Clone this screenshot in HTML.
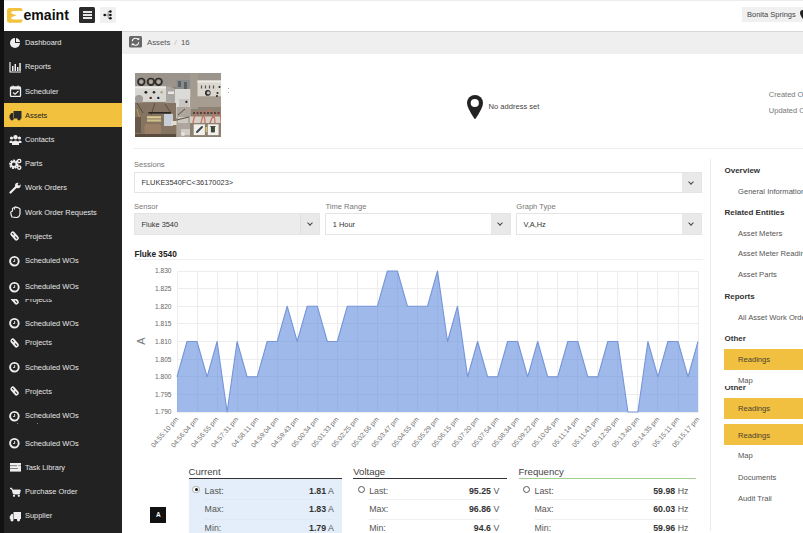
<!DOCTYPE html><html><head><meta charset="utf-8"><style>
*{margin:0;padding:0;box-sizing:border-box;white-space:nowrap}
html,body{width:803px;height:533px;overflow:hidden;background:#fff;font-family:"Liberation Sans",sans-serif;color:#333}
.a{position:absolute;white-space:nowrap}
.si{position:absolute;left:25px;font-size:7.45px;color:#e4e4e4;line-height:10px;height:10px}
.lbl{position:absolute;font-size:7.55px;color:#777;line-height:10px}
.inp{position:absolute;border:1px solid #e4e4e4;background:#fff;font-size:7.4px;color:#333;line-height:20px;padding-left:6.5px;padding-top:.6px}
.arr{position:absolute;top:0;right:0;bottom:0;width:19px;background:#e9e9e9}
.arr:after{content:"";position:absolute;left:7px;top:7px;width:3px;height:3px;border-right:1.1px solid #444;border-bottom:1.1px solid #444;transform:rotate(45deg)}
.nh{position:absolute;margin-top:.6px;left:724.5px;font-size:8px;font-weight:bold;color:#333;line-height:10px}
.ni{position:absolute;margin-top:.6px;left:738px;font-size:7.6px;color:#555;line-height:10px}
.band{position:absolute;left:724px;width:79px;height:21px;background:#f1c040}
.th{position:absolute;font-size:9.6px;color:#444;line-height:12px}
.rl{position:absolute;font-size:8.8px;color:#555;line-height:11px}
.rv{position:absolute;font-size:8.8px;color:#555;line-height:11px;text-align:right}
.rv b{color:#333}
</style></head><body>

<div class="a" style="left:0;top:0;width:3.5px;height:533px;background:#111"></div>
<div class="a" style="left:3.5px;top:30.5px;width:118px;height:503px;background:#222"></div>
<div class="a" style="left:3.5px;top:103.4px;width:118px;height:24px;background:#f2c23f"></div>
<svg style="position:absolute;left:9px;top:36.7px" width="13" height="12" viewBox="0 0 13 12"><circle cx="6" cy="6" r="5" fill="#eee"/><path d="M6 6 L11 6 A5 5 0 0 0 6 1 Z" fill="#222"/><path d="M7 5 L11 5 A5 5 0 0 0 7 1Z" fill="#eee"/></svg>
<div class="si" style="top:38.2px;color:#e4e4e4">Dashboard</div>
<svg style="position:absolute;left:9px;top:60.8px" width="13" height="12" viewBox="0 0 13 12"><path d="M1 1 V11 H12" stroke="#eee" stroke-width="1.2" fill="none"/><rect x="3" y="5" width="1.5" height="5" fill="#eee"/><rect x="5.5" y="3" width="1.5" height="7" fill="#eee"/><rect x="8" y="6" width="1.5" height="4" fill="#eee"/><rect x="10.3" y="2" width="1.5" height="8" fill="#eee"/></svg>
<div class="si" style="top:62.3px;color:#e4e4e4">Reports</div>
<svg style="position:absolute;left:9px;top:85.0px" width="13" height="12" viewBox="0 0 13 12"><rect x="1.5" y="2" width="10" height="9.5" rx="1" stroke="#eee" stroke-width="1.3" fill="none"/><rect x="1.5" y="2" width="10" height="2.5" fill="#eee"/><path d="M4 7.5 L6 9.3 L9.5 6" stroke="#eee" stroke-width="1.2" fill="none"/><rect x="3.5" y="0.5" width="1.2" height="2" fill="#eee"/><rect x="8.5" y="0.5" width="1.2" height="2" fill="#eee"/></svg>
<div class="si" style="top:86.5px;color:#e4e4e4">Scheduler</div>
<svg style="position:absolute;left:9px;top:109.3px" width="13" height="12" viewBox="0 0 13 12"><rect x="4.5" y="2" width="8" height="7.5" fill="#2a2a2a"/><path d="M4 4 H2.3 L0.5 6.5 V9.5 H4Z" fill="#2a2a2a"/><circle cx="3" cy="9.8" r="1.7" fill="#2a2a2a"/><circle cx="10" cy="9.8" r="1.7" fill="#2a2a2a"/></svg>
<div class="si" style="top:110.8px;color:#222">Assets</div>
<svg style="position:absolute;left:9px;top:133.7px" width="13" height="12" viewBox="0 0 13 12"><circle cx="6.5" cy="3.2" r="2.2" fill="#eee"/><circle cx="2.5" cy="4" r="1.6" fill="#eee"/><circle cx="10.5" cy="4" r="1.6" fill="#eee"/><path d="M3 11 V8 Q6.5 5 10 8 V11Z" fill="#eee"/><path d="M0.5 9 V7.5 Q2 6 3.5 7 V9Z" fill="#eee"/><path d="M12.5 9 V7.5 Q11 6 9.5 7 V9Z" fill="#eee"/></svg>
<div class="si" style="top:135.2px;color:#e4e4e4">Contacts</div>
<svg style="position:absolute;left:9px;top:157.7px" width="13" height="12" viewBox="0 0 13 12"><circle cx="4.8" cy="6.3" r="3.6" fill="none" stroke="#eee" stroke-width="2.2" stroke-dasharray="1.9 0.75"/><circle cx="4.8" cy="6.3" r="2.6" fill="none" stroke="#eee" stroke-width="1.6"/><circle cx="10.2" cy="3" r="1.6" fill="none" stroke="#eee" stroke-width="1.4"/><circle cx="10.2" cy="9.6" r="1.6" fill="none" stroke="#eee" stroke-width="1.4"/></svg>
<div class="si" style="top:159.2px;color:#e4e4e4">Parts</div>
<svg style="position:absolute;left:9px;top:181.8px" width="13" height="12" viewBox="0 0 13 12"><path d="M1.5 10.5 L7 5" stroke="#eee" stroke-width="2.2" stroke-linecap="round"/><circle cx="8.8" cy="3.5" r="2.8" fill="#eee"/><circle cx="10" cy="2.2" r="1.2" fill="#222"/></svg>
<div class="si" style="top:183.3px;color:#e4e4e4">Work Orders</div>
<svg style="position:absolute;left:9px;top:206.0px" width="13" height="12" viewBox="0 0 13 12"><path d="M3 11 Q1.5 8 1.8 6 L3.5 5 V2.5 Q4.5 1 5.5 2.5 V1.5 Q6.5 0.5 7.5 1.5 Q8.5 1 9.5 2 Q10.5 2 11 3 V8 Q10.5 11 8 11.5Z" fill="none" stroke="#eee" stroke-width="1.2"/></svg>
<div class="si" style="top:207.5px;color:#e4e4e4">Work Order Requests</div>
<svg style="position:absolute;left:9px;top:230.3px" width="13" height="12" viewBox="0 0 13 12"><g transform="rotate(-42 5.6 6)"><rect x="3.2" y="0.8" width="4.8" height="10.4" rx="2.4" fill="#eee"/><path d="M5.6 2.6 V4.2 M5.6 7.2 V9.2" stroke="#333" stroke-width="1.1" stroke-linecap="round"/></g></svg>
<div class="si" style="top:231.8px;color:#e4e4e4">Projects</div>
<svg style="position:absolute;left:9px;top:254.6px" width="13" height="12" viewBox="0 0 13 12"><circle cx="5.4" cy="6.2" r="4.3" fill="none" stroke="#eee" stroke-width="1.9"/><path d="M5.6 4 V6.5 H4" stroke="#eee" stroke-width="1.1" fill="none" opacity="0.8"/></svg>
<div class="si" style="top:256.1px;color:#e4e4e4">Scheduled WOs</div>
<div class="a" style="left:3.5px;top:294.8px;width:118px;height:12px;overflow:hidden"><div class="si" style="left:21.5px;top:0px;">Projects</div></div>
<svg style="position:absolute;left:9px;top:293.8px" width="13" height="12" viewBox="0 0 13 12"><g transform="rotate(-42 5.6 6)"><rect x="3.2" y="0.8" width="4.8" height="10.4" rx="2.4" fill="#eee"/><path d="M5.6 2.6 V4.2 M5.6 7.2 V9.2" stroke="#333" stroke-width="1.1" stroke-linecap="round"/></g></svg>
<div class="a" style="left:3.5px;top:277px;width:118px;height:21.6px;background:#222"></div>
<svg style="position:absolute;left:9px;top:280.9px" width="13" height="12" viewBox="0 0 13 12"><circle cx="5.4" cy="6.2" r="4.3" fill="none" stroke="#eee" stroke-width="1.9"/><path d="M5.6 4 V6.5 H4" stroke="#eee" stroke-width="1.1" fill="none" opacity="0.8"/></svg>
<div class="si" style="top:282.4px;color:#e4e4e4">Scheduled WOs</div>
<svg style="position:absolute;left:9px;top:317.4px" width="13" height="12" viewBox="0 0 13 12"><circle cx="5.4" cy="6.2" r="4.3" fill="none" stroke="#eee" stroke-width="1.9"/><path d="M5.6 4 V6.5 H4" stroke="#eee" stroke-width="1.1" fill="none" opacity="0.8"/></svg>
<div class="si" style="top:318.9px;color:#e4e4e4">Scheduled WOs</div>
<svg style="position:absolute;left:9px;top:336.5px" width="13" height="12" viewBox="0 0 13 12"><g transform="rotate(-42 5.6 6)"><rect x="3.2" y="0.8" width="4.8" height="10.4" rx="2.4" fill="#eee"/><path d="M5.6 2.6 V4.2 M5.6 7.2 V9.2" stroke="#333" stroke-width="1.1" stroke-linecap="round"/></g></svg>
<div class="si" style="top:338.0px;color:#e4e4e4">Projects</div>
<svg style="position:absolute;left:9px;top:361.0px" width="13" height="12" viewBox="0 0 13 12"><circle cx="5.4" cy="6.2" r="4.3" fill="none" stroke="#eee" stroke-width="1.9"/><path d="M5.6 4 V6.5 H4" stroke="#eee" stroke-width="1.1" fill="none" opacity="0.8"/></svg>
<div class="si" style="top:362.5px;color:#e4e4e4">Scheduled WOs</div>
<svg style="position:absolute;left:9px;top:385.4px" width="13" height="12" viewBox="0 0 13 12"><g transform="rotate(-42 5.6 6)"><rect x="3.2" y="0.8" width="4.8" height="10.4" rx="2.4" fill="#eee"/><path d="M5.6 2.6 V4.2 M5.6 7.2 V9.2" stroke="#333" stroke-width="1.1" stroke-linecap="round"/></g></svg>
<div class="si" style="top:386.9px;color:#e4e4e4">Projects</div>
<svg style="position:absolute;left:9px;top:409.5px" width="13" height="12" viewBox="0 0 13 12"><circle cx="5.4" cy="6.2" r="4.3" fill="none" stroke="#eee" stroke-width="1.9"/><path d="M5.6 4 V6.5 H4" stroke="#eee" stroke-width="1.1" fill="none" opacity="0.8"/></svg>
<div class="si" style="top:411.0px;color:#e4e4e4">Scheduled WOs</div>
<svg style="position:absolute;left:9px;top:437.0px" width="13" height="12" viewBox="0 0 13 12"><circle cx="5.4" cy="6.2" r="4.3" fill="none" stroke="#eee" stroke-width="1.9"/><path d="M5.6 4 V6.5 H4" stroke="#eee" stroke-width="1.1" fill="none" opacity="0.8"/></svg>
<div class="si" style="top:438.5px;color:#e4e4e4">Scheduled WOs</div>
<svg style="position:absolute;left:9px;top:461.0px" width="13" height="12" viewBox="0 0 13 12"><rect x="1" y="2" width="11" height="8.6" fill="#eee"/><rect x="1" y="4.4" width="7" height="0.7" fill="#555"/><rect x="1" y="7.2" width="8" height="0.7" fill="#555"/><rect x="9" y="4.4" width="3" height="0.7" fill="#888"/></svg>
<div class="si" style="top:462.5px;color:#e4e4e4">Task Library</div>
<svg style="position:absolute;left:9px;top:485.5px" width="13" height="12" viewBox="0 0 13 12"><path d="M1 2.2 H2.8 L4.4 8 H10.5 L11.3 4 H3.6Z" fill="#eee" stroke="#eee" stroke-width="0.9" stroke-linejoin="round"/><circle cx="5" cy="9.8" r="1.1" fill="#eee"/><circle cx="9.8" cy="9.8" r="1.1" fill="#eee"/></svg>
<div class="si" style="top:487.0px;color:#e4e4e4">Purchase Order</div>
<svg style="position:absolute;left:9px;top:509.9px" width="13" height="12" viewBox="0 0 13 12"><rect x="4.5" y="2" width="7.5" height="7" fill="#eee"/><path d="M4 4 H2.5 L0.8 6.5 V9 H4Z" fill="#eee"/><circle cx="3" cy="9.8" r="1.6" fill="#eee"/><circle cx="9.5" cy="9.8" r="1.6" fill="#eee"/></svg>
<div class="si" style="top:511.4px;color:#e4e4e4">Supplier</div>
<div class="a" style="left:16.5px;top:422.5px;width:1px;height:1px;background:#888"></div><div class="a" style="left:36.8px;top:423.3px;width:1px;height:1px;background:#888"></div>
<div class="a" style="left:3.5px;top:0;width:800px;height:30.5px;background:#fff;border-top:1px solid #ededed"></div>
<div class="a" style="left:121.5px;top:30.5px;width:682px;height:2px;background:linear-gradient(#d5d5d5,#efefef)"></div>
<svg class="a" style="left:7.3px;top:7.9px" width="16" height="15" viewBox="0 0 16 15"><rect x="0" y="0" width="15.5" height="14.7" rx="2.5" fill="#f2c23f"/><path d="M16 3.1 H6.5 Q4 3.1 4 5.5 V9.2 Q4 11.6 6.5 11.6 H16Z" fill="#fff"/><path d="M4 5.3 L9.5 7.35 L4 9.4Z" fill="#f2c23f"/></svg>
<div class="a" style="left:23.5px;top:6.8px;font-size:14.1px;font-weight:bold;color:#111;line-height:17px">emaint</div>
<div class="a" style="left:79.3px;top:7.1px;width:15.7px;height:15.7px;background:#2b2b2b;border-radius:1.5px"></div>
<div class="a" style="left:83px;top:11.2px;width:9px;height:1.4px;background:#e6e6e6"></div>
<div class="a" style="left:83px;top:14.2px;width:9px;height:1.4px;background:#e6e6e6"></div>
<div class="a" style="left:83px;top:17.2px;width:9px;height:1.4px;background:#e6e6e6"></div>
<div class="a" style="left:99.9px;top:7.1px;width:15.7px;height:15.7px;background:#f0f0f0;border-radius:1.5px"></div>
<svg class="a" style="left:100px;top:7px" width="16" height="16" viewBox="0 0 16 16"><path d="M4.7 8 H10.4 M8.2 4.5 V11.3 M8.2 4.5 H10.4 M8.2 11.3 H10.4" stroke="#777" stroke-width="0.8"/><circle cx="4.7" cy="8" r="1.3" fill="#111"/><circle cx="10.4" cy="4.5" r="1.3" fill="#111"/><circle cx="10.4" cy="8" r="1.3" fill="#111"/><circle cx="10.4" cy="11.3" r="1.3" fill="#111"/></svg>
<div class="a" style="left:741.8px;top:6.7px;width:62px;height:15.8px;background:#f0f0f0"></div>
<div class="a" style="left:747px;top:9.9px;font-size:7.5px;color:#444;line-height:10px">Bonita Springs</div>
<svg class="a" style="left:800.3px;top:10px" width="6" height="10" viewBox="0 0 6 10"><path d="M3 0 A3 3 0 0 1 6 3 Q6 5 3 9 Q0 5 0 3 A3 3 0 0 1 3 0Z" fill="#222"/></svg>
<div class="a" style="left:121.5px;top:31.5px;width:682px;height:22.3px;background:#efefef"></div>
<div class="a" style="left:121.5px;top:30.5px;width:682px;height:1.5px;background:#d8d8d8"></div>
<svg class="a" style="left:128.8px;top:36.2px" width="13" height="11.5" viewBox="0 0 13 11.5"><rect width="13" height="11.5" rx="1.5" fill="#666"/><path d="M3.3 5.3 A3.3 3.3 0 0 1 9.5 4" fill="none" stroke="#fff" stroke-width="1.1"/><path d="M9.7 6.2 A3.3 3.3 0 0 1 3.5 7.5" fill="none" stroke="#fff" stroke-width="1.1"/><path d="M8 3.8 H10.3 V1.6Z" fill="#fff"/><path d="M5 7.7 H2.7 V9.9Z" fill="#fff"/></svg>
<div class="a" style="left:147px;top:37.5px;font-size:7.8px;color:#555;line-height:10px">Assets <span style="color:#bbb;margin:0 2px">/</span> 16</div>
<svg class="a" style="left:134.5px;top:72.5px" width="86" height="64.5" viewBox="0 0 86 64.5">
<defs><filter id="bl" x="-5%" y="-5%" width="110%" height="110%"><feGaussianBlur stdDeviation="0.8"/></filter><clipPath id="cp"><rect width="86" height="64.5"/></clipPath></defs>
<g clip-path="url(#cp)"><g>
<rect x="-2" y="-2" width="90" height="70" fill="#8e8274"/>
<rect x="-2" y="-2" width="90" height="16" fill="#9b948c"/>
<rect x="55" y="0" width="8" height="36" fill="#a39a90"/>
<path d="M30 14 Q34 12 40 16 L40 45 L31 45Z" fill="#aaa6a2"/>
<circle cx="6.3" cy="8.8" r="3.3" fill="none" stroke="#2e2a28" stroke-width="1.7"/><circle cx="15.9" cy="8.8" r="3.3" fill="none" stroke="#2e2a28" stroke-width="1.7"/><circle cx="23.6" cy="8.8" r="3.3" fill="none" stroke="#2e2a28" stroke-width="1.7"/>
<circle cx="6.3" cy="8.8" r="1.6" fill="#b0aaa4"/><circle cx="15.9" cy="8.8" r="1.6" fill="#b0aaa4"/><circle cx="23.6" cy="8.8" r="1.6" fill="#b0aaa4"/>
<rect x="-1" y="13.4" width="32" height="15.5" fill="#d9d7d2"/>
<rect x="-1" y="13.4" width="32" height="2" fill="#ecebe8"/>
<circle cx="10.9" cy="19.3" r="1.4" fill="#1c1c1c"/><circle cx="19" cy="19.3" r="1.3" fill="#2a2a2a"/><circle cx="26.7" cy="19.3" r="1.3" fill="#a8a878"/><circle cx="15.7" cy="24.9" r="1.2" fill="#5a2020"/><circle cx="23.3" cy="24.9" r="1.2" fill="#202850"/>
<circle cx="4" cy="26" r="4" fill="#a09a94"/>
<rect x="33" y="18.5" width="6" height="2.5" fill="#e8e8e8"/>
<rect x="41.5" y="7" width="13.5" height="9" fill="#8a8c8c"/>
<path d="M43 8 h3 v6 h-3z M49 9 h3 v7 h-3z" fill="#5a6066"/>
<rect x="40" y="16" width="15.3" height="29" fill="#dcdad6"/>
<rect x="44" y="26" width="10" height="10" fill="#c9c6c1"/>
<circle cx="51.4" cy="28.9" r="1.1" fill="#222"/>
<rect x="62.5" y="7.5" width="24" height="16" fill="#dbd7cf"/>
<rect x="62.5" y="7.5" width="24" height="2" fill="#eeebe5"/>
<path d="M66.5 12.5 v3 M70.5 12.5 v3 M74.5 12.5 v3 M78.5 12.5 v3" stroke="#55504a" stroke-width="1.2"/>
<circle cx="72.8" cy="19.9" r="2.8" fill="#2a2826"/><circle cx="73.3" cy="19.8" r="1.6" fill="#c8c6d0"/>
<circle cx="84.5" cy="14" r="1" fill="#222"/><circle cx="82.5" cy="20" r="1.1" fill="#2a3020"/><circle cx="82" cy="23" r="1" fill="#222"/>
<rect x="55" y="24" width="31" height="10" fill="#a69c90"/>
<rect x="0" y="30" width="41" height="34.5" fill="#857461"/>
<path d="M2 30 L8 40 M20 30 L16 42 M30 31 L36 40" stroke="#5a4e42" stroke-width="1"/>
<rect x="13.4" y="39" width="22.3" height="1.6" fill="#2a2622"/>
<rect x="12" y="43.2" width="14" height="2.2" fill="#d9cb95"/><rect x="12" y="46.4" width="14" height="2.2" fill="#cfc08a"/>
<rect x="29" y="41" width="9" height="12" fill="#c8ced8"/>
<path d="M2 36 Q6 44 4 54" stroke="#b8a060" stroke-width="1" fill="none"/>
<rect x="9.5" y="51" width="16.5" height="11" rx="3" fill="#9b7f66"/>
<rect x="0" y="61" width="41" height="4" fill="#5a4c3e"/>
<rect x="0" y="44" width="6" height="16" fill="#6a5848"/>
<rect x="36" y="48" width="6" height="4" fill="#e0dccf"/>
<rect x="41.5" y="34" width="13.5" height="30" fill="#aea69c"/><rect x="43" y="44" width="10" height="6" fill="#ccc8c0"/><rect x="46" y="56" width="9" height="6" fill="#d0ccc4"/>
<path d="M43 42 L50 36 M41.5 47 L54 44" stroke="#5a5048" stroke-width="1"/>
<circle cx="48" cy="61" r="2" fill="#e8e4da"/>
<rect x="55" y="43.5" width="31" height="7" fill="#d8d0c6"/>
<path d="M58 50 Q60 37 66 39 Q70 41 70 50 M66 50 Q68 38 75 38 Q80 40 80 50 M75 50 Q78 40 84 40 Q86 42 86 50" stroke="#c27462" stroke-width="1.3" fill="none"/>
<path d="M58 40 h28" stroke="#3a3230" stroke-width="1.6" stroke-dasharray="2 1.5"/>
<rect x="55" y="50" width="31" height="14" fill="#8c8070"/>
<rect x="58.7" y="51.3" width="11.2" height="10.8" fill="#f1f0ec"/>
<rect x="72.8" y="51.3" width="10.8" height="10.8" fill="#f1f0ec"/>
<path d="M62 59 L67 54" stroke="#3c4450" stroke-width="2" stroke-linecap="round"/>
<rect x="75.9" y="53.6" width="4" height="5.8" fill="#3e4436"/><rect x="75.2" y="53" width="5.4" height="0.9" fill="#3e4436"/>
<rect x="70.6" y="54" width="1.6" height="5" fill="#d8c070"/>
</g></g></svg>

<div class="a" style="left:227.8px;top:88.2px;width:1.2px;height:1.3px;background:#aaa"></div><div class="a" style="left:227.8px;top:92px;width:1.2px;height:1.3px;background:#aaa"></div>
<svg class="a" style="left:466.8px;top:94.6px" width="16" height="24.5" viewBox="0 0 16 24.5"><path d="M8 0 A8 8 0 0 1 16 8 Q16 13 8 24.5 Q0 13 0 8 A8 8 0 0 1 8 0Z" fill="#222"/><circle cx="7.8" cy="8" r="4.1" fill="#fff"/></svg>
<div class="a" style="left:488.6px;top:101.8px;font-size:7.55px;color:#444;line-height:10px">No address set</div>
<div class="a" style="left:768.8px;top:89.6px;font-size:7.5px;color:#777;line-height:10px">Created On</div>
<div class="a" style="left:768.8px;top:105.8px;font-size:7.5px;color:#777;line-height:10px">Updated On</div>
<div class="a" style="left:133.5px;top:148px;width:670px;height:1px;background:#ececec"></div>
<div class="a" style="left:710px;top:159px;width:1px;height:372px;background:#ececec"></div>
<div class="lbl" style="left:134px;top:160.2px">Sessions</div>
<div class="inp" style="left:134px;top:171.5px;width:568px;height:21.5px">FLUKE3540FC&lt;36170023&gt;<div class="arr"></div></div>
<div class="lbl" style="left:134px;top:202px">Sensor</div>
<div class="inp" style="left:134px;top:213px;width:186px;height:21.5px;background:#ececec">Fluke 3540<div class="arr" style="border-left:1px solid #e0e0e0"></div></div>
<div class="lbl" style="left:325.5px;top:202px">Time Range</div>
<div class="inp" style="left:325.3px;top:213px;width:186px;height:21.5px">1 Hour<div class="arr"></div></div>
<div class="lbl" style="left:516.3px;top:202px">Graph Type</div>
<div class="inp" style="left:516px;top:213px;width:186px;height:21.5px">V,A,Hz<div class="arr"></div></div>
<div class="a" style="left:134.4px;top:248.8px;font-size:8.3px;font-weight:bold;color:#222;line-height:11px">Fluke 3540</div>
<div class="a" style="left:133.5px;top:259px;width:569px;height:1px;background:#f0f0f0"></div>
<svg width="803" height="533" style="position:absolute;left:0;top:0">
<g stroke="#ededed" stroke-width="1" shape-rendering="crispEdges"><line x1="177.0" y1="271" x2="177.0" y2="412" /><line x1="197.0" y1="271" x2="197.0" y2="412" /><line x1="217.1" y1="271" x2="217.1" y2="412" /><line x1="237.1" y1="271" x2="237.1" y2="412" /><line x1="257.2" y1="271" x2="257.2" y2="412" /><line x1="277.2" y1="271" x2="277.2" y2="412" /><line x1="297.2" y1="271" x2="297.2" y2="412" /><line x1="317.3" y1="271" x2="317.3" y2="412" /><line x1="337.3" y1="271" x2="337.3" y2="412" /><line x1="357.3" y1="271" x2="357.3" y2="412" /><line x1="377.4" y1="271" x2="377.4" y2="412" /><line x1="397.4" y1="271" x2="397.4" y2="412" /><line x1="417.5" y1="271" x2="417.5" y2="412" /><line x1="437.5" y1="271" x2="437.5" y2="412" /><line x1="457.5" y1="271" x2="457.5" y2="412" /><line x1="477.6" y1="271" x2="477.6" y2="412" /><line x1="497.6" y1="271" x2="497.6" y2="412" /><line x1="517.7" y1="271" x2="517.7" y2="412" /><line x1="537.7" y1="271" x2="537.7" y2="412" /><line x1="557.7" y1="271" x2="557.7" y2="412" /><line x1="577.8" y1="271" x2="577.8" y2="412" /><line x1="597.8" y1="271" x2="597.8" y2="412" /><line x1="617.8" y1="271" x2="617.8" y2="412" /><line x1="637.9" y1="271" x2="637.9" y2="412" /><line x1="657.9" y1="271" x2="657.9" y2="412" /><line x1="678.0" y1="271" x2="678.0" y2="412" /><line x1="698.0" y1="271" x2="698.0" y2="412" /><line x1="177" y1="271.0" x2="698" y2="271.0" /><line x1="177" y1="288.6" x2="698" y2="288.6" /><line x1="177" y1="306.2" x2="698" y2="306.2" /><line x1="177" y1="323.9" x2="698" y2="323.9" /><line x1="177" y1="341.5" x2="698" y2="341.5" /><line x1="177" y1="359.1" x2="698" y2="359.1" /><line x1="177" y1="376.8" x2="698" y2="376.8" /><line x1="177" y1="394.4" x2="698" y2="394.4" /><line x1="177" y1="412.0" x2="698" y2="412.0" /></g>
<polygon points="177,412 177.0,376.8 187.0,341.5 197.0,341.5 207.1,376.8 217.1,341.5 227.1,412.0 237.1,341.5 247.1,376.8 257.2,376.8 267.2,341.5 277.2,341.5 287.2,306.2 297.2,341.5 307.2,306.2 317.3,306.2 327.3,341.5 337.3,341.5 347.3,306.2 357.3,306.2 367.4,306.2 377.4,306.2 387.4,271.0 397.4,271.0 407.4,306.2 417.5,306.2 427.5,306.2 437.5,271.0 447.5,341.5 457.5,306.2 467.6,376.8 477.6,341.5 487.6,376.8 497.6,376.8 507.6,341.5 517.7,341.5 527.7,376.8 537.7,341.5 547.7,376.8 557.7,376.8 567.8,341.5 577.8,341.5 587.8,376.8 597.8,376.8 607.8,341.5 617.8,341.5 627.9,412.0 637.9,412.0 647.9,341.5 657.9,376.8 667.9,341.5 678.0,341.5 688.0,376.8 698.0,341.5 698,412" fill="rgba(100,142,222,0.62)" stroke="none"/>
<polyline points="177.0,376.8 187.0,341.5 197.0,341.5 207.1,376.8 217.1,341.5 227.1,412.0 237.1,341.5 247.1,376.8 257.2,376.8 267.2,341.5 277.2,341.5 287.2,306.2 297.2,341.5 307.2,306.2 317.3,306.2 327.3,341.5 337.3,341.5 347.3,306.2 357.3,306.2 367.4,306.2 377.4,306.2 387.4,271.0 397.4,271.0 407.4,306.2 417.5,306.2 427.5,306.2 437.5,271.0 447.5,341.5 457.5,306.2 467.6,376.8 477.6,341.5 487.6,376.8 497.6,376.8 507.6,341.5 517.7,341.5 527.7,376.8 537.7,341.5 547.7,376.8 557.7,376.8 567.8,341.5 577.8,341.5 587.8,376.8 597.8,376.8 607.8,341.5 617.8,341.5 627.9,412.0 637.9,412.0 647.9,341.5 657.9,376.8 667.9,341.5 678.0,341.5 688.0,376.8 698.0,341.5" fill="none" stroke="#7595d8" stroke-width="1.1" stroke-linejoin="round"/>
<g font-family="Liberation Sans" font-size="6.6" fill="#666"><text x="171.5" y="273.4" text-anchor="end">1.830</text><text x="171.5" y="291.0" text-anchor="end">1.825</text><text x="171.5" y="308.6" text-anchor="end">1.820</text><text x="171.5" y="326.3" text-anchor="end">1.815</text><text x="171.5" y="343.9" text-anchor="end">1.810</text><text x="171.5" y="361.5" text-anchor="end">1.805</text><text x="171.5" y="379.1" text-anchor="end">1.800</text><text x="171.5" y="396.8" text-anchor="end">1.795</text><text x="171.5" y="414.4" text-anchor="end">1.790</text></g>
<text x="0" y="0" transform="translate(145,341) rotate(-90)" text-anchor="middle" font-family="Liberation Sans" font-size="11" fill="#777">A</text>
<g font-family="Liberation Sans" font-size="6.8" fill="#707070"><text x="0" y="0" transform="translate(178.7,419.5) rotate(-49)" text-anchor="end">04:55:10 pm</text><text x="0" y="0" transform="translate(198.7,419.5) rotate(-49)" text-anchor="end">04:56:04 pm</text><text x="0" y="0" transform="translate(218.8,419.5) rotate(-49)" text-anchor="end">04:56:55 pm</text><text x="0" y="0" transform="translate(238.8,419.5) rotate(-49)" text-anchor="end">04:57:31 pm</text><text x="0" y="0" transform="translate(258.9,419.5) rotate(-49)" text-anchor="end">04:58:11 pm</text><text x="0" y="0" transform="translate(278.9,419.5) rotate(-49)" text-anchor="end">04:59:04 pm</text><text x="0" y="0" transform="translate(298.9,419.5) rotate(-49)" text-anchor="end">04:59:43 pm</text><text x="0" y="0" transform="translate(319.0,419.5) rotate(-49)" text-anchor="end">05:00:34 pm</text><text x="0" y="0" transform="translate(339.0,419.5) rotate(-49)" text-anchor="end">05:01:33 pm</text><text x="0" y="0" transform="translate(359.0,419.5) rotate(-49)" text-anchor="end">05:02:25 pm</text><text x="0" y="0" transform="translate(379.1,419.5) rotate(-49)" text-anchor="end">05:02:56 pm</text><text x="0" y="0" transform="translate(399.1,419.5) rotate(-49)" text-anchor="end">05:03:47 pm</text><text x="0" y="0" transform="translate(419.2,419.5) rotate(-49)" text-anchor="end">05:04:55 pm</text><text x="0" y="0" transform="translate(439.2,419.5) rotate(-49)" text-anchor="end">05:05:29 pm</text><text x="0" y="0" transform="translate(459.2,419.5) rotate(-49)" text-anchor="end">05:06:15 pm</text><text x="0" y="0" transform="translate(479.3,419.5) rotate(-49)" text-anchor="end">05:07:20 pm</text><text x="0" y="0" transform="translate(499.3,419.5) rotate(-49)" text-anchor="end">05:07:54 pm</text><text x="0" y="0" transform="translate(519.4,419.5) rotate(-49)" text-anchor="end">05:08:34 pm</text><text x="0" y="0" transform="translate(539.4,419.5) rotate(-49)" text-anchor="end">05:09:22 pm</text><text x="0" y="0" transform="translate(559.4,419.5) rotate(-49)" text-anchor="end">05:10:06 pm</text><text x="0" y="0" transform="translate(579.5,419.5) rotate(-49)" text-anchor="end">05:11:14 pm</text><text x="0" y="0" transform="translate(599.5,419.5) rotate(-49)" text-anchor="end">05:11:43 pm</text><text x="0" y="0" transform="translate(619.5,419.5) rotate(-49)" text-anchor="end">05:12:30 pm</text><text x="0" y="0" transform="translate(639.6,419.5) rotate(-49)" text-anchor="end">05:13:40 pm</text><text x="0" y="0" transform="translate(659.6,419.5) rotate(-49)" text-anchor="end">05:14:35 pm</text><text x="0" y="0" transform="translate(679.7,419.5) rotate(-49)" text-anchor="end">05:15:11 pm</text><text x="0" y="0" transform="translate(699.7,419.5) rotate(-49)" text-anchor="end">05:15:17 pm</text></g>
</svg>
<div class="a" style="left:150.2px;top:506.6px;width:16.3px;height:16.4px;background:#111;color:#fff;font-size:6.5px;font-weight:bold;text-align:center;line-height:16.4px">A</div>
<div class="th" style="left:188.6px;top:466px">Current</div>
<div class="a" style="left:188.6px;top:477.7px;width:153.4px;height:1.6px;background:#333"></div>
<div class="a" style="left:188.6px;top:479.3px;width:153.4px;height:54px;background:#e3eefa"></div>
<div class="a" style="left:192.29999999999998px;top:485.9px;width:7.6px;height:7.6px;border-radius:50%;border:1px solid #aaa;background:#fff"></div><div class="a" style="left:194.5px;top:488.1px;width:3.2px;height:3.2px;border-radius:50%;background:#111"></div>
<div class="rl" style="left:204.6px;top:485.9px">Last:</div>
<div class="rv" style="left:188.6px;width:145.4px;top:485.9px"><b>1.81</b> A</div>
<div class="rl" style="left:204.6px;top:504.1px">Max:</div>
<div class="rv" style="left:188.6px;width:145.4px;top:504.1px"><b>1.83</b> A</div>
<div class="rl" style="left:204.6px;top:523.2px">Min:</div>
<div class="rv" style="left:188.6px;width:145.4px;top:523.2px"><b>1.79</b> A</div>
<div class="a" style="left:204.6px;top:498.7px;width:129.4px;height:1px;background:#dde8f4"></div>
<div class="a" style="left:204.6px;top:518.6px;width:129.4px;height:1px;background:#dde8f4"></div>
<div class="th" style="left:353.2px;top:466px">Voltage</div>
<div class="a" style="left:353.2px;top:477.7px;width:154.1px;height:1.6px;background:#333"></div>
<div class="a" style="left:357.7px;top:485.5px;width:7.4px;height:7.4px;border-radius:50%;border:1px solid #555;background:#fff"></div>
<div class="rl" style="left:369.2px;top:485.9px">Last:</div>
<div class="rv" style="left:353.2px;width:146.1px;top:485.9px"><b>95.25</b> V</div>
<div class="rl" style="left:369.2px;top:504.1px">Max:</div>
<div class="rv" style="left:353.2px;width:146.1px;top:504.1px"><b>96.86</b> V</div>
<div class="rl" style="left:369.2px;top:523.2px">Min:</div>
<div class="rv" style="left:353.2px;width:146.1px;top:523.2px"><b>94.6</b> V</div>
<div class="a" style="left:369.2px;top:498.7px;width:130.1px;height:1px;background:#efefef"></div>
<div class="a" style="left:369.2px;top:518.6px;width:130.1px;height:1px;background:#efefef"></div>
<div class="th" style="left:518.5px;top:466px">Frequency</div>
<div class="a" style="left:518.5px;top:477.7px;width:177.9px;height:1.6px;background:#9fd28f"></div>
<div class="a" style="left:523.0px;top:485.5px;width:7.4px;height:7.4px;border-radius:50%;border:1px solid #555;background:#fff"></div>
<div class="rl" style="left:534.5px;top:485.9px">Last:</div>
<div class="rv" style="left:518.5px;width:169.9px;top:485.9px"><b>59.98</b> Hz</div>
<div class="rl" style="left:534.5px;top:504.1px">Max:</div>
<div class="rv" style="left:518.5px;width:169.9px;top:504.1px"><b>60.03</b> Hz</div>
<div class="rl" style="left:534.5px;top:523.2px">Min:</div>
<div class="rv" style="left:518.5px;width:169.9px;top:523.2px"><b>59.96</b> Hz</div>
<div class="a" style="left:534.5px;top:498.7px;width:153.9px;height:1px;background:#efefef"></div>
<div class="a" style="left:534.5px;top:518.6px;width:153.9px;height:1px;background:#efefef"></div>
<div class="nh" style="top:165.2px">Overview</div>
<div class="ni" style="top:186px">General Information</div>
<div class="nh" style="top:207.7px">Related Entities</div>
<div class="ni" style="top:228px">Asset Meters</div>
<div class="ni" style="top:248.7px">Asset Meter Readings</div>
<div class="ni" style="top:269.5px">Asset Parts</div>
<div class="nh" style="top:291.4px">Reports</div>
<div class="ni" style="top:312.5px">All Asset Work Orders</div>
<div class="nh" style="top:333.7px">Other</div>
<div class="band" style="top:348.5px"></div>
<div class="ni" style="top:354.2px;color:#4a4232">Readings</div>
<div class="nh" style="top:382.3px">Other</div>
<div class="a" style="left:724px;top:370px;width:79px;height:16.2px;background:#fff"></div>
<div class="ni" style="top:375px">Map</div>
<div class="band" style="top:397.5px"></div>
<div class="ni" style="top:403.2px;color:#4a4232">Readings</div>
<div class="band" style="top:424.3px"></div>
<div class="ni" style="top:430px;color:#4a4232">Readings</div>
<div class="ni" style="top:450.7px">Map</div>
<div class="ni" style="top:472.2px">Documents</div>
<div class="ni" style="top:493.1px">Audit Trail</div>
</body></html>
